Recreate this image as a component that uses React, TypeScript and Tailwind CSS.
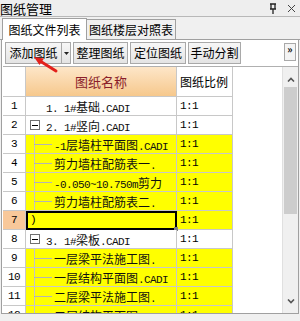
type Row = {
  n: number;
  kind: "top" | "parent" | "child" | "edit";
  text: string;
  yellow: boolean;
};

const rows: Row[] = [
  { n: 1, kind: "top", text: "1. 1#基础.CADI", yellow: false },
  { n: 2, kind: "parent", text: "2. 1#竖向.CADI", yellow: false },
  { n: 3, kind: "child", text: "-1层墙柱平面图.CADI", yellow: true },
  { n: 4, kind: "child", text: "剪力墙柱配筋表一.", yellow: true },
  { n: 5, kind: "child", text: "-0.050~10.750m剪力", yellow: true },
  { n: 6, kind: "child", text: "剪力墙柱配筋表二.", yellow: true },
  { n: 7, kind: "edit", text: ")", yellow: true },
  { n: 8, kind: "parent", text: "3. 1#梁板.CADI", yellow: false },
  { n: 9, kind: "child", text: "一层梁平法施工图.", yellow: true },
  { n: 10, kind: "child", text: "一层结构平面图.CADI", yellow: true },
  { n: 11, kind: "child", text: "二层梁平法施工图.", yellow: true },
  { n: 12, kind: "child", text: "二层结构平面图.CADI", yellow: true },
];

// SimSun-like: half-width latin (6px) + full-width CJK (12px)
function Mixed({ text }: { text: string }) {
  const parts = text.match(/[\x00-\x7f]+|[^\x00-\x7f]+/g) ?? [];
  return (
    <>
      {parts.map((p, i) =>
        /^[\x00-\x7f]/.test(p) ? (
          <span
            key={i}
            className="text-[11px] tracking-[-0.6px] whitespace-pre"
            style={{ fontFamily: '"Liberation Mono", monospace' }}
          >
            {p}
          </span>
        ) : (
          <span key={i} className="text-[12px]" style={{ fontFamily: '"Noto Sans CJK SC", sans-serif' }}>
            {p}
          </span>
        ),
      )}
    </>
  );
}

function ToolButton({ label, w }: { label: string; w: string }) {
  return (
    <div
      className={`${w} h-[22px] flex items-center justify-center border border-[#a9a9a9] bg-gradient-to-b from-[#f7f7f7] to-[#e4e4e4] text-[12px] leading-none text-black`}
    >
      {label}
    </div>
  );
}

function NameCell({ r }: { r: Row }) {
  if (r.kind === "edit") {
    return (
      <div className="relative w-[151px] h-[19px] bg-[#ffff00] border-2 border-black flex items-center pl-[2px] leading-none">
        <Mixed text={r.text} />
        <span className="absolute -right-[3px] -bottom-[3px] w-[4px] h-[4px] bg-[#808080]" />
      </div>
    );
  }
  return (
    <div
      className={`relative w-[151px] h-[19px] border-b border-r border-[#c8c8c8] flex items-center overflow-hidden whitespace-nowrap leading-none text-[#111] ${
        r.yellow ? "bg-[#ffff00]" : "bg-white"
      }`}
    >
      {r.kind === "top" && (
        <span className="pl-[20px]">
          <Mixed text={r.text} />
        </span>
      )}
      {r.kind === "parent" && (
        <>
          <span className="ml-[4px] w-[10px] h-[10px] shrink-0 border border-[#707070] bg-white flex items-center justify-center">
            <span className="w-[6px] h-[1px] bg-black" />
          </span>
          <span className="pl-[6px]">
            <Mixed text={r.text} />
          </span>
        </>
      )}
      {r.kind === "child" && (
        <>
          <span className="absolute left-[8px] top-0 h-[19px] border-l border-[#c4c4c4]" />
          <span className="absolute left-[8px] top-[9px] w-[18px] border-t border-[#b4b4b4]" />
          <span className="pl-[28px]">
            <Mixed text={r.text} />
          </span>
        </>
      )}
    </div>
  );
}

export default function App() {
  return (
    <div
      className="relative w-[300px] h-[321px] overflow-hidden bg-[#f0f0f0] text-black"
      style={{ fontFamily: '"Noto Sans CJK SC", sans-serif' }}
    >
      {/* title bar */}
      <div className="h-[17px] flex items-center justify-between border-b border-[#b8b8b8] bg-[#eeeeee]">
        <span className="text-[13px] leading-none">图纸管理</span>
        <div className="flex items-center gap-[10px] pr-[4px]">
          <svg width="8" height="11" viewBox="0 0 8 11">
            <path d="M1 1h6M2 1v5M6 1v5M1 6h6M4 6v5" stroke="#222" strokeWidth="1.3" fill="none" />
          </svg>
          <svg width="9" height="9" viewBox="0 0 9 9">
            <path d="M1 1l7 7M8 1l-7 7" stroke="#444" strokeWidth="1" />
          </svg>
        </div>
      </div>

      {/* tabs */}
      <div className="h-[23px] flex items-end pl-[2px] border-b border-[#a0a0a0]">
        <div className="w-[85px] h-[22px] -mb-px flex items-center justify-center border border-b-0 border-[#a0a0a0] bg-white text-[12px] leading-none">
          图纸文件列表
        </div>
        <div className="w-[89px] h-[20px] flex items-center justify-center border border-l-0 border-b-0 border-[#a0a0a0] bg-[#f0f0f0] text-[12px] leading-none">
          图纸楼层对照表
        </div>
      </div>

      {/* panel */}
      <div className="bg-white mx-[1px] border-x border-b border-[#a0a0a0] h-[274px] flex flex-col">
        <div className="h-[26px] shrink-0 flex items-center pl-[3px] pr-[2px]">
          <ToolButton label="添加图纸" w="w-[57px]" />
          <div className="w-[9px] h-[22px] border border-l-0 border-[#a9a9a9] bg-gradient-to-b from-[#f7f7f7] to-[#e4e4e4] flex items-center justify-center">
            <svg width="5" height="3" viewBox="0 0 5 3">
              <path d="M0 0h5L2.5 3z" fill="#222" />
            </svg>
          </div>
          <div className="ml-[2px]">
            <ToolButton label="整理图纸" w="w-[55px]" />
          </div>
          <div className="ml-[2px]">
            <ToolButton label="定位图纸" w="w-[56px]" />
          </div>
          <div className="ml-[2px]">
            <ToolButton label="手动分割" w="w-[53px]" />
          </div>
          <div className="ml-auto w-[12px] h-[18px] -mt-[2px] border border-[#a9a9a9] bg-[#f4f4f4] flex items-start justify-center text-[10px] font-bold leading-[9px]">
            »
          </div>
        </div>

        {/* grid */}
        <div className="flex flex-1 min-h-0 ml-[1px] border-t border-[#b0b0b0] overflow-hidden">
          <div className="flex flex-col">
            {/* header */}
            <div className="flex h-[30px] shrink-0">
              <div className="w-[23px] border-r border-b border-[#c8c8c8] bg-white" />
              <div className="w-[151px] border-r border-b border-[#c8c8c8] bg-gradient-to-b from-[#fde6c8] to-[#f6c88c] flex items-center justify-center text-[13px] leading-none text-[#8b1e2b]">
                图纸名称
              </div>
              <div className="w-[56px] border-r border-b border-[#c8c8c8] bg-white flex items-center pl-[3px] text-[12px] leading-none">
                图纸比例
              </div>
            </div>
            {rows.map((r) => (
              <div key={r.n} className="flex h-[19px] shrink-0">
                <div
                  className={`w-[23px] border-r border-b border-[#c8c8c8] flex items-center justify-center leading-none ${
                    r.kind === "edit" ? "bg-[#f8c89a]" : "bg-white"
                  }`}
                >
                  <Mixed text={String(r.n)} />
                </div>
                <NameCell r={r} />
                <div
                  className={`w-[56px] border-r border-b border-[#c8c8c8] flex items-center pl-[3px] leading-none ${
                    r.yellow ? "bg-[#ffff00]" : "bg-white"
                  }`}
                >
                  <Mixed text="1:1" />
                </div>
              </div>
            ))}
          </div>
          <div className="flex-1 bg-white" />
          {/* scrollbar */}
          <div className="w-[16px] flex flex-col bg-[#f0f0f0] border-l border-[#e0e0e0]">
            <div className="h-[20px] shrink-0 flex items-end justify-center pb-[5px]">
              <svg width="8" height="5" viewBox="0 0 8 5">
                <path d="M1 4.5L4 1.5L7 4.5" stroke="#555" strokeWidth="1.6" fill="none" />
              </svg>
            </div>
            <div className="h-[127px] shrink-0 mx-[1px] bg-[#cdcdcd]" />
            <div className="flex-1" />
            <div className="h-[20px] shrink-0 flex items-start justify-center pt-[6px]">
              <svg width="8" height="5" viewBox="0 0 8 5">
                <path d="M1 0.5L4 3.5L7 0.5" stroke="#555" strokeWidth="1.6" fill="none" />
              </svg>
            </div>
          </div>
        </div>
      </div>

      {/* red annotation arrow */}
      <svg className="absolute left-0 top-0 pointer-events-none" width="300" height="321">
        <path d="M56 71L40 61" stroke="#e3211b" strokeWidth="3" strokeLinecap="round" />
        <path d="M34 57L44 58.5L39.5 65z" fill="#e3211b" />
      </svg>
    </div>
  );
}
